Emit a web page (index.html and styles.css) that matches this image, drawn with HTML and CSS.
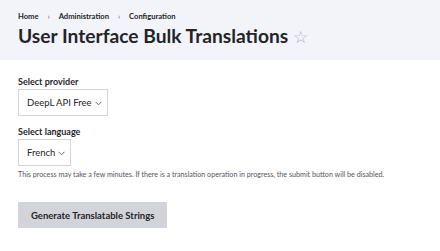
FILE: index.html
```html
<!DOCTYPE html>
<html lang="en">
<head>
<meta charset="utf-8">
<title>User Interface Bulk Translations</title>
<link rel="stylesheet" href="styles.css">
</head>
<body>
<header class="page-header">
  <nav class="breadcrumb">
    <a href="#">Home</a><span class="sep">›</span><a href="#">Administration</a><span class="sep">›</span><a href="#">Configuration</a>
  </nav>
  <h1 class="title">User Interface Bulk Translations <span class="star">☆</span></h1>
</header>
<main class="content">
  <div class="field">
    <label class="label">Select provider</label>
    <div class="select"><span>DeepL API Free</span><svg class="chev" width="7" height="5" viewBox="0 0 7 5"><path d="M0.5 0.8 L3.5 3.8 L6.5 0.8" fill="none" stroke="#545560" stroke-width="0.9"/></svg></div>
  </div>
  <div class="field">
    <label class="label">Select language</label>
    <div class="select"><span>French</span><svg class="chev" width="7" height="5" viewBox="0 0 7 5"><path d="M0.5 0.8 L3.5 3.8 L6.5 0.8" fill="none" stroke="#545560" stroke-width="0.9"/></svg></div>
    <p class="desc">This process may take a few minutes. If there is a translation operation in progress, the submit button will be disabled.</p>
  </div>
  <button class="btn">Generate Translatable Strings</button>
</main>
</body>
</html>
```
FILE: styles.css
```css
html, body { margin: 0; padding: 0; }
body {
  background: #fff;
  font-family: "Lato", "Open Sans", sans-serif;
  color: #232429;
  width: 440px;
  height: 251px;
  overflow: hidden;
}
.page-header {
  background: #f3f4f9;
  height: 60px;
  box-sizing: border-box;
  padding: 11px 18px 0;
}
.breadcrumb {
  font-size: 7.6px;
  font-weight: 700;
  line-height: 10px;
  display: flex;
  align-items: center;
}
.breadcrumb a { color: #232429; text-decoration: none; }
.breadcrumb .sep { margin: 0 9px; font-weight: 400; color: #545560; }
.title {
  margin: 2px 0 0;
  font-size: 19.2px;
  line-height: 25px;
  font-weight: 700;
}
.star {
  font-weight: 400;
  color: #b0b2bb;
  font-size: 17px;
}
.content { padding: 16px 18px 0; }
.field { margin-bottom: 10px; }
.label {
  display: block;
  font-size: 9px;
  font-weight: 700;
  line-height: 11px;
  margin-bottom: 2px;
}
.select {
  display: inline-flex;
  align-items: center;
  gap: 3px;
  height: 27px;
  box-sizing: border-box;
  border: 1px solid #d4d4d8;
  padding: 0 5px 0 8px;
  font-size: 9.5px;
  color: #232429;
}
.chev { margin-top: 1px; }
.desc {
  margin: 4px 0 0;
  font-size: 7.15px;
  color: #545560;
  line-height: 9px;
}
.btn {
  margin-top: 13px;
  background: #d3d4d9;
  border: 0;
  border-radius: 1px;
  height: 26px;
  padding: 0 13px;
  font-family: inherit;
  font-weight: 700;
  font-size: 9.5px;
  color: #232429;
}
```
